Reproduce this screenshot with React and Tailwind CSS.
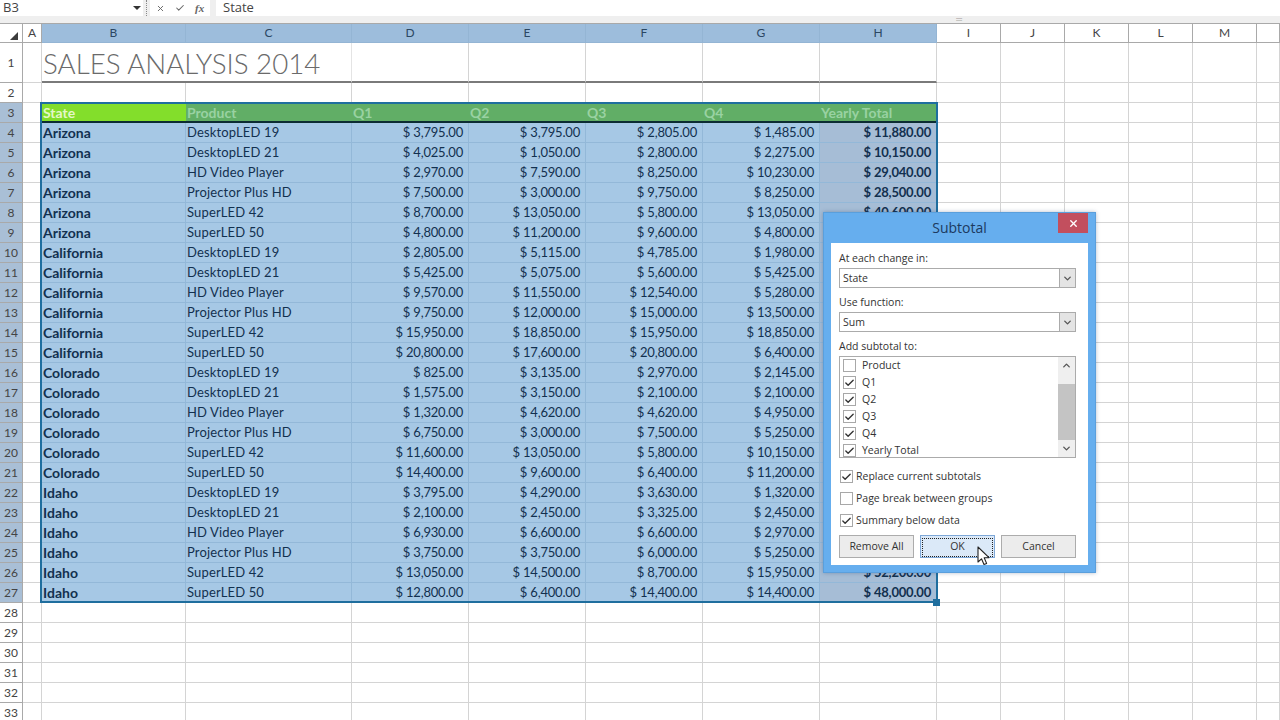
import React from 'react';
import { Check, ChevronDown, ChevronUp, X } from 'lucide-react';

const COLS = ['B', 'C', 'D', 'E', 'F', 'G', 'H'];
const FREE = ['I', 'J', 'K', 'L', 'M', ''];

const rows = [
  ['Arizona', 'DesktopLED 19', 3795, 3795, 2805, 1485],
  ['Arizona', 'DesktopLED 21', 4025, 1050, 2800, 2275],
  ['Arizona', 'HD Video Player', 2970, 7590, 8250, 10230],
  ['Arizona', 'Projector Plus HD', 7500, 3000, 9750, 8250],
  ['Arizona', 'SuperLED 42', 8700, 13050, 5800, 13050],
  ['Arizona', 'SuperLED 50', 4800, 11200, 9600, 4800],
  ['California', 'DesktopLED 19', 2805, 5115, 4785, 1980],
  ['California', 'DesktopLED 21', 5425, 5075, 5600, 5425],
  ['California', 'HD Video Player', 9570, 11550, 12540, 5280],
  ['California', 'Projector Plus HD', 9750, 12000, 15000, 13500],
  ['California', 'SuperLED 42', 15950, 18850, 15950, 18850],
  ['California', 'SuperLED 50', 20800, 17600, 20800, 6400],
  ['Colorado', 'DesktopLED 19', 825, 3135, 2970, 2145],
  ['Colorado', 'DesktopLED 21', 1575, 3150, 2100, 2100],
  ['Colorado', 'HD Video Player', 1320, 4620, 4620, 4950],
  ['Colorado', 'Projector Plus HD', 6750, 3000, 7500, 5250],
  ['Colorado', 'SuperLED 42', 11600, 13050, 5800, 10150],
  ['Colorado', 'SuperLED 50', 14400, 9600, 6400, 11200],
  ['Idaho', 'DesktopLED 19', 3795, 4290, 3630, 1320],
  ['Idaho', 'DesktopLED 21', 2100, 2450, 3325, 2450],
  ['Idaho', 'HD Video Player', 6930, 6600, 6600, 2970],
  ['Idaho', 'Projector Plus HD', 3750, 3750, 6000, 5250],
  ['Idaho', 'SuperLED 42', 13050, 14500, 8700, 15950],
  ['Idaho', 'SuperLED 50', 12800, 6400, 14400, 14400],
];

const money = (n) => '$ ' + n.toLocaleString('en-US') + '.00';

const head = 'flex items-center justify-center border-r border-b border-[#a9a9a9] text-[12px] text-[#444]';
const blank = 'border-r border-b border-[#d4d4d4]';
const sel = 'flex items-center border-r border-b border-[#93b8d8] bg-[#a6c8e5] pl-[1px] text-[#12304f] whitespace-nowrap overflow-hidden';

const FreeCells = () => FREE.map((c, i) => <div key={i} className={blank} />);

const Box = ({ checked }) => (
  <span className="flex h-[13px] w-[13px] shrink-0 items-center justify-center border border-[#a8a8a8] bg-white">
    {checked && <Check size={12} strokeWidth={3} className="text-[#333]" />}
  </span>
);

const Select = ({ value }) => (
  <div className="flex h-[20px] items-center border border-[#ababab] bg-white text-[#333]">
    <span className="flex-1 pl-[3px] pt-[1px]">{value}</span>
    <span className="flex h-full w-[16px] items-center justify-center border-l border-[#ababab] bg-[#e4e4e4]">
      <ChevronDown size={11} strokeWidth={3} className="text-[#555]" />
    </span>
  </div>
);

const Button = ({ children, active }) => (
  <div className={`flex h-[23px] w-[75px] items-center justify-center border pt-[1px] text-[#333] ${active ? 'border-[#7fa8d8] bg-[#dbe9f8]' : 'border-[#acacac] bg-[#ececec]'}`}>
    {active ? (
      <span className="flex h-[19px] w-[71px] items-center justify-center border border-dotted border-[#222]">{children}</span>
    ) : children}
  </div>
);

const Dialog = () => (
  <div className="absolute left-[823px] top-[212px] flex h-[361px] w-[273px] flex-col border border-[#5a9fdc] bg-[#66aeee] px-[7px] pb-[7px] font-['Open_Sans',sans-serif] text-[10.5px] shadow-[0_0_4px_rgba(40,70,110,0.35)]">
    <div className="relative flex h-[30px] shrink-0 items-center justify-center pb-[2px] text-[14px] text-[#1c3a60]">
      Subtotal
      <span className="absolute right-0 top-0 flex h-[20px] w-[30px] items-center justify-center bg-[#c24f5e]">
        <X size={11} strokeWidth={3} className="text-white" />
      </span>
    </div>
    <div className="flex flex-1 flex-col bg-white pl-[8px] pr-[12px]">
      <div className="mb-[2px] mt-[8px] h-[15px] text-[#333]">At each change in:</div>
      <Select value="State" />
      <div className="mb-[2px] mt-[7px] h-[15px] text-[#333]">Use function:</div>
      <Select value="Sum" />
      <div className="mb-[2px] mt-[7px] h-[15px] text-[#333]">Add subtotal to:</div>
      <div className="flex h-[102px] border border-[#ababab]">
        <div className="flex flex-1 flex-col overflow-hidden pl-[3px]">
          {[['Product', false], ['Q1', true], ['Q2', true], ['Q3', true], ['Q4', true], ['Yearly Total', true]].map(([t, c]) => (
            <div key={t} className="flex h-[17px] shrink-0 items-center gap-[6px] text-[#333]">
              <Box checked={c} />
              {t}
            </div>
          ))}
        </div>
        <div className="flex w-[17px] flex-col items-center bg-[#efefef]">
          <span className="flex h-[17px] items-center"><ChevronUp size={11} strokeWidth={3} className="text-[#555]" /></span>
          <span className="h-[10px]" />
          <span className="h-[57px] w-full bg-[#c4c4c4]" />
          <span className="flex h-[17px] items-center"><ChevronDown size={11} strokeWidth={3} className="text-[#555]" /></span>
        </div>
      </div>
      <div className="mt-[12px] flex flex-col gap-[9px] pl-[1px] text-[#333]">
        {[['Replace current subtotals', true], ['Page break between groups', false], ['Summary below data', true]].map(([t, c]) => (
          <div key={t} className="flex h-[13px] items-center gap-[3px]">
            <Box checked={c} />
            {t}
          </div>
        ))}
      </div>
      <div className="mt-[8px] flex justify-between">
        <Button>Remove All</Button>
        <Button active>OK</Button>
        <Button>Cancel</Button>
      </div>
    </div>
  </div>
);

export default function App() {
  return (
    <div className="relative h-[720px] w-[1280px] overflow-hidden bg-white font-['Lato',sans-serif]">
      {/* FORMULA BAR */}
      <div className="flex h-[16px] items-center bg-white font-['Open_Sans',sans-serif] text-[13px] leading-none text-[#444]">
        <div className="flex w-[143px] items-center justify-between pb-[1px] pl-[3px] pr-[2px]">
          B3
          <span className="h-0 w-0 border-x-[4px] border-t-[4px] border-x-transparent border-t-[#333]" />
        </div>
        <div className="flex h-full w-[7px] justify-center bg-[#efefef]">
          <span className="h-full border-l border-dotted border-[#888]" />
        </div>
        <div className="flex h-full w-[60px] items-center bg-white pl-[6px] text-[#666]">
          <X size={9} strokeWidth={2.5} />
          <Check size={10} strokeWidth={2.5} className="ml-[10px]" />
          <span className="ml-[10px] font-['Liberation_Serif',serif] text-[11px] font-bold italic leading-none">fx</span>
        </div>
        <div className="h-full w-[6px] bg-[#efefef]" />
        <div className="pb-[2px] pl-[7px]">State</div>
      </div>
      <div className="relative flex h-[7px] justify-center bg-[#efefef]">
        <span className="translate-x-[319px] text-[5px] leading-[7px] tracking-tighter text-[#777]">::::::</span>
      </div>

      {/* SHEET */}
      <div className="relative grid grid-cols-[23px_19px_144px_166px_117px_117px_117px_117px_117px_64px_64px_64px_64px_64px_23px] grid-rows-[19px_40px_repeat(32,20px)] border-t border-[#a9a9a9]">
        {/* column heads */}
        <div className={`${head} bg-white`}>
          <span className="ml-[6px] mt-[6px] h-0 w-0 border-l-[8px] border-t-[8px] border-l-transparent border-t-[#3c3c3c] [transform:scaleY(-1)]" />
        </div>
        <div className={`${head} bg-white`}>A</div>
        {COLS.map((c) => (
          <div key={c} className="flex items-center justify-center border-r border-b border-[#94b5d4] bg-[#9dbddc] text-[12px] text-[#2b4763]">{c}</div>
        ))}
        {FREE.map((c, i) => <div key={i} className={head}>{c}</div>)}

        {/* row 1 */}
        <div className={head}>1</div>
        <div className={blank} />
        <div className="col-span-2 flex items-center overflow-visible whitespace-nowrap border-r border-b-2 border-r-[#e4e4e4] border-b-[#7a7a7a] pl-[1px] pt-[3px] text-[27.7px] font-light text-[#6a6a6a]">SALES ANALYSIS 2014</div>
        {COLS.slice(2).map((c) => <div key={c} className="border-r border-b-2 border-r-[#d4d4d4] border-b-[#7a7a7a]" />)}
        <FreeCells />

        {/* row 2 */}
        <div className={head}>2</div>
        <div className={blank} />
        {COLS.map((c) => <div key={c} className={blank} />)}
        <FreeCells />

        {/* row 3 */}
        <div className={`${head} border-[#8fa5bb] bg-[#a9bfd6] text-[#2b4763]`}>3</div>
        <div className={blank} />
        <div className="flex items-center border-b-2 border-[#0c2c33] bg-[#83de2b] pl-[1px] pt-[1px] text-[14px] font-bold text-[#e4f7c8]">State</div>
        {['Product', 'Q1', 'Q2', 'Q3', 'Q4', 'Yearly Total'].map((t) => (
          <div key={t} className="flex items-center whitespace-nowrap border-b-2 border-[#0c2c33] bg-[#61ae66] pl-[1px] pt-[1px] text-[14px] font-bold text-[#99d2a2]">{t}</div>
        ))}
        <FreeCells />

        {/* data rows */}
        {rows.map((r, i) => (
          <React.Fragment key={i}>
            <div className={`${head} border-[#8fa5bb] bg-[#a9bfd6] text-[#2b4763]`}>{i + 4}</div>
            <div className={blank} />
            <div className={`${sel} pb-[1px] text-[14px] font-bold`}>{r[0]}</div>
            <div className={`${sel} pt-[1px] text-[13px] tracking-[0.15px]`}>{r[1]}</div>
            {r.slice(2).map((n, j) => (
              <div key={j} className={`${sel} justify-end pr-[5px] pt-[1px] text-[13px] tracking-[-0.2px]`}>{money(n)}</div>
            ))}
            <div className={`${sel} justify-end !bg-[#a6bdd6] pr-[5px] pt-[1px] text-[13px] font-bold tracking-[-0.2px]`}>{money(r[2] + r[3] + r[4] + r[5])}</div>
            <FreeCells />
          </React.Fragment>
        ))}

        {/* empty rows */}
        {[28, 29, 30, 31, 32, 33].map((n) => (
          <React.Fragment key={n}>
            <div className={head}>{n}</div>
            <div className={blank} />
            {COLS.map((c) => <div key={c} className={blank} />)}
            <FreeCells />
          </React.Fragment>
        ))}

        {/* selection outline */}
        <div className="pointer-events-none absolute left-[40px] top-[78px] h-[501px] w-[898px] border-2 border-[#1f6e9e]" />
        <div className="absolute left-[933px] top-[575px] h-[7px] w-[7px] bg-[#1f6e9e]" />
      </div>

      <Dialog />

      {/* mouse pointer */}
      <svg className="absolute left-[977px] top-[546px]" width="14" height="21" viewBox="0 0 14 21">
        <path d="M1 1 L1 16 L4.5 12.8 L7 18.5 L9.6 17.4 L7.2 11.8 L12 11.6 Z" fill="#fff" stroke="#222" strokeWidth="1.1" strokeLinejoin="round" />
      </svg>
    </div>
  );
}
